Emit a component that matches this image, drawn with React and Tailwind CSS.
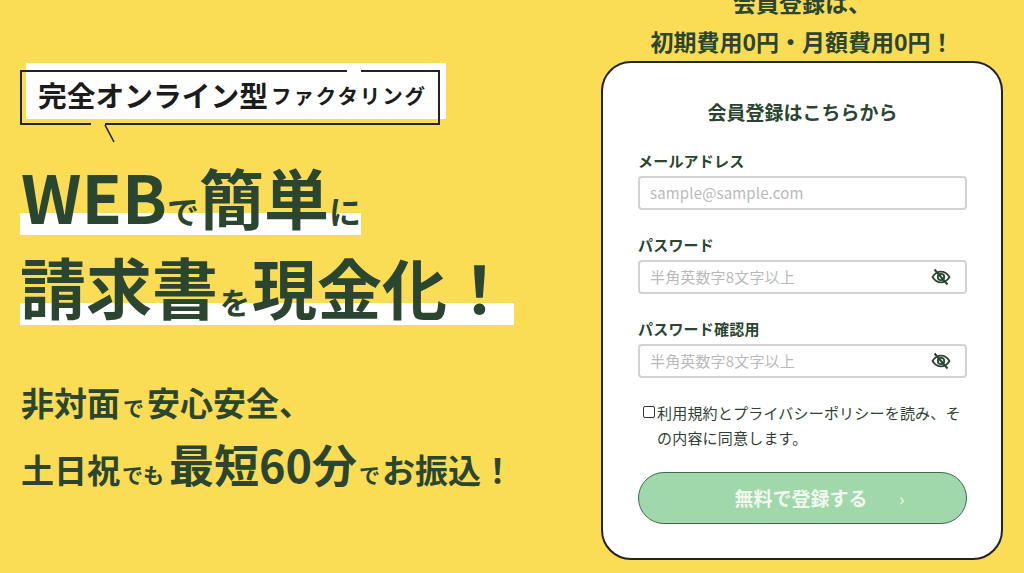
const FONT = "font-['Noto_Sans_CJK_JP',sans-serif]";

function EyeOff() {
  return (
    <svg width="20" height="18" viewBox="0 0 20 18" fill="none" stroke="#2a4530" className="shrink-0">
      <path d="M1.5 9C4 5 7 3.6 10 3.6S16 5 18.500 9C16 13 13 14.400 10 14.400S4 13 1.500 9Z" strokeWidth="1.800" />
      <circle cx="10" cy="9" r="3.200" strokeWidth="1.800" />
      <path d="M3.500 1.500L16.500 16.500" strokeWidth="2" />
    </svg>
  );
}

function Field({ label, placeholder, eye, mt }) {
  return (
    <div className={mt}>
      <div className="text-[15px] leading-[20px] font-bold tracking-[0.2px] text-[#2a4530]">{label}</div>
      <div className="mt-[5px] flex h-[34px] items-center justify-between rounded-[4px] border-2 border-[#d2d2d2] bg-white pl-[10px] pr-[14px]">
        <span className="text-[15px] leading-[20px] tracking-[0.15px] text-[#b9b9b9]">{placeholder}</span>
        {eye && <EyeOff />}
      </div>
    </div>
  );
}

export default function App() {
  return (
    <div className={`${FONT} flex h-[573px] w-[1024px] overflow-hidden bg-[#fbdc55] text-[#2a4530]`}>
      <div className="w-[601px] shrink-0 pl-[20px] pt-[63px]">
        <div className="relative ml-[6px] flex h-[56px] w-[420px] items-center bg-white pl-[12px] pt-[8px]">
          <span className="text-[28.75px] leading-none font-bold text-[#1c1c1c]">完全オンライン型</span>
          <span className="ml-[3px] text-[20.5px] leading-none font-bold tracking-[1.9px] text-[#1c1c1c]">ファクタリング</span>
          <div className="absolute left-[-6px] top-[7px] h-[55px] w-[420px] border-2 border-[#222]" />
          <div className="absolute left-[321px] top-[6px] h-[4px] w-[14px] bg-white" />
          <div className="absolute left-[65px] top-[60px] h-[4px] w-[14px] bg-[#fbdc55]" />
          <svg width="12" height="20" viewBox="0 0 12 20" className="absolute left-[78px] top-[61px]" fill="none" stroke="#222" strokeWidth="1.600">
            <path d="M1 1L10 18" />
          </svg>
        </div>

        <h1 className="mt-[36px] font-bold">
          <div>
            <span className="inline-flex h-[80px] items-baseline bg-[linear-gradient(transparent_72%,white_72%)] leading-[80px]">
              <span className="pl-[1px] text-[66px]">WEB</span>
              <span className="text-[32px]">で</span>
              <span className="text-[65px]">簡単</span>
              <span className="text-[32px]">に</span>
            </span>
          </div>
          <div className="mt-[10px]">
            <span className="inline-flex h-[80px] items-baseline bg-[linear-gradient(transparent_72%,white_72%)] pr-[2px] leading-[80px]">
              <span className="text-[66px]">請求書</span>
              <span className="mx-[2px] text-[30px]">を</span>
              <span className="text-[65px]">現金化！</span>
            </span>
          </div>
        </h1>

        <div className="mt-[52px] font-bold">
          <div className="flex h-[50px] items-baseline pl-[1px] leading-[50px]">
            <span className="text-[33px]">非対面</span>
            <span className="mx-[3px] text-[21px]">で</span>
            <span className="text-[33px]">安心安全、</span>
          </div>
          <div className="mt-[12px] flex h-[50px] items-baseline pl-[1px] leading-[50px]">
            <span className="text-[33px]">土日祝</span>
            <span className="mx-[2px] text-[21px]">でも</span>
            <span className="ml-[3px] text-[45px]">最短60分</span>
            <span className="mx-[2px] text-[21px]">で</span>
            <span className="text-[33px]">お振込！</span>
          </div>
        </div>
      </div>

      <div className="w-[402px] shrink-0">
        <div className="-mt-[17px] text-center text-[23px] font-bold leading-[39px]">
          <div>会員登録は、</div>
          <div>初期費用0円・月額費用0円！</div>
        </div>
        <div className="h-[499px] rounded-[30px] border-2 border-[#222] bg-white pl-[35px] pr-[34px] pt-[35px]">
          <div className="text-center text-[19px] leading-[28px] font-bold">会員登録はこちらから</div>
          <Field mt="mt-[25px]" label="メールアドレス" placeholder="sample@sample.com" />
          <Field mt="mt-[25px]" label="パスワード" placeholder="半角英数字8文字以上" eye />
          <Field mt="mt-[25px]" label="パスワード確認用" placeholder="半角英数字8文字以上" eye />
          <div className="mt-[22px] pl-[5px]">
            <div className="relative pl-[14px] text-[15px] leading-[25px] tracking-[0.2px] text-[#2f3f33]">
              <span className="absolute left-0 top-[6px] h-[12px] w-[12px] rounded-[2px] border border-[#333] bg-white" />
              利用規約とプライバシーポリシーを読み、その内容に同意します。
            </div>
          </div>
          <div className="relative mt-[22px] flex h-[52px] items-center justify-center rounded-full border border-[#3f6b4d] bg-[#a0d8ab] text-[19px] font-bold text-[#f1f8ee]">
            <span className="-ml-[3px]">無料で登録する</span>
            <span className="absolute left-[260px] top-[15px] text-[18px] leading-[20px] font-normal">›</span>
          </div>
        </div>
      </div>
    </div>
  );
}
